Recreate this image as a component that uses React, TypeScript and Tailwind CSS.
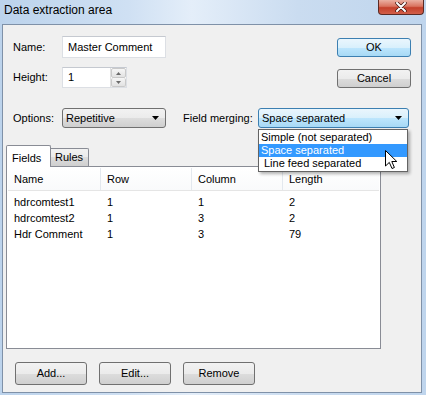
import React from 'react';

const rows = [
  { name: 'hdrcomtest1', row: '1', col: '1', len: '2' },
  { name: 'hdrcomtest2', row: '1', col: '3', len: '2' },
  { name: 'Hdr Comment', row: '1', col: '3', len: '79' },
];

function Caret() {
  return (
    <svg width="7" height="4" viewBox="0 0 7 4">
      <path d="M0 0 H7 L3.5 4 Z" fill="#000" />
    </svg>
  );
}

function Spinner() {
  return (
    <div className="flex flex-col w-[16px] h-full border-l border-[#e0e0e0]">
      <div className="flex-1 flex items-center justify-center bg-gradient-to-b from-[#f6f6f6] to-[#e2e2e2] border border-[#c9c9c9] rounded-[2px]">
        <svg width="5" height="3" viewBox="0 0 5 3">
          <path d="M0 3 H5 L2.5 0 Z" fill="#6b6b6b" />
        </svg>
      </div>
      <div className="flex-1 flex items-center justify-center bg-gradient-to-b from-[#f6f6f6] to-[#e2e2e2] border border-t-0 border-[#c9c9c9] rounded-[2px]">
        <svg width="5" height="3" viewBox="0 0 5 3">
          <path d="M0 0 H5 L2.5 3 Z" fill="#6b6b6b" />
        </svg>
      </div>
    </div>
  );
}

function Button({ label, primary }: { label: string; primary?: boolean }) {
  return (
    <div
      className={
        primary
          ? 'w-[74px] h-[21px] flex items-center justify-center rounded-[3px] border border-[#3c7fb1] bg-[linear-gradient(#eaf6fd,#d9f0fc_50%,#bee6fd_50%,#a7d9f5)]'
          : 'w-[74px] h-[21px] flex items-center justify-center rounded-[3px] border border-[#707070] bg-[linear-gradient(#f2f2f2,#ebebeb_50%,#dddddd_50%,#cfcfcf)]'
      }
    >
      {label}
    </div>
  );
}

function BottomButton({ label }: { label: string }) {
  return (
    <div className="w-[72px] h-[23px] flex items-center justify-center rounded-[3px] border border-[#707070] bg-[linear-gradient(#f2f2f2,#ebebeb_50%,#dddddd_50%,#cfcfcf)]">
      {label}
    </div>
  );
}

export default function App() {
  return (
    <div className="relative w-[426px] h-[395px] overflow-hidden flex flex-col font-['Liberation_Sans',Arial,sans-serif] text-[11px] text-black bg-[linear-gradient(90deg,#bcd3ec,#cfe0f3_30%,#e4eef9_45%,#cadcf0_70%,#bfd5ed)]">
      {/* Title bar */}
      <div className="h-[24px] flex items-start shrink-0">
        <span className="pl-[4px] pt-[3px] text-[12px] leading-[15px]">Data extraction area</span>
        <div className="ml-auto mr-[2px] w-[46px] h-[15px] flex items-center justify-center rounded-b-[4px] border border-t-0 border-[#5b2a24] bg-[linear-gradient(#eab0a2,#d9735f_45%,#c4402b_55%,#d2604a)]">
          <svg width="12" height="10" viewBox="0 0 12 10">
            <path d="M2 1 L10 9 M10 1 L2 9" stroke="#3b1410" strokeWidth="3.4" strokeLinecap="round" />
            <path d="M2 1 L10 9 M10 1 L2 9" stroke="#ffffff" strokeWidth="2" strokeLinecap="round" />
          </svg>
        </div>
      </div>

      {/* Client area */}
      <div className="ml-[2px] mr-[4px] mb-[2px] flex-1 border border-[#7f91a8] bg-[#f0f0f0] flex flex-col">
        <div className="pt-[11px] h-[63px] flex">
          <div className="pl-[10px] flex flex-col">
            <div className="flex items-center h-[22px]">
              <span className="w-[49px]">Name:</span>
              <div className="w-[104px] h-[22px] flex items-center pl-[5px] bg-white border border-[#dcdfe4] border-t-[#c5c9d0]">
                Master Comment
              </div>
            </div>
            <div className="flex items-center h-[21px] mt-[9px]">
              <span className="w-[49px]">Height:</span>
              <div className="w-[65px] h-[21px] flex items-stretch bg-white border border-[#dcdfe4] border-t-[#c5c9d0]">
                <span className="flex-1 flex items-center pl-[5px]">1</span>
                <Spinner />
              </div>
            </div>
          </div>
          <div className="ml-auto mr-[10px] pt-[2px] flex flex-col gap-[12px]">
            <Button label="OK" primary />
            <Button label="Cancel" />
          </div>
        </div>

        {/* Options row */}
        <div className="mt-[20px] h-[20px] pl-[10px] flex items-center">
          <span className="w-[49px]">Options:</span>
          <div className="w-[104px] h-[20px] flex items-center justify-between pl-[3px] pr-[6px] rounded-[3px] border border-[#707070] bg-[linear-gradient(#f2f2f2,#ebebeb_50%,#dddddd_50%,#cfcfcf)]">
            <span>Repetitive</span>
            <Caret />
          </div>
          <span className="ml-[17px] w-[75px]">Field merging:</span>
          <div className="relative w-[151px] h-[20px]">
            <div className="w-full h-full flex items-center justify-between pl-[3px] pr-[6px] rounded-[3px] border border-[#3c7fb1] bg-[linear-gradient(#eaf6fd,#d9f0fc_50%,#bee6fd_50%,#a7d9f5)]">
              <span>Space separated</span>
              <Caret />
            </div>
            <div className="absolute left-0 top-[21px] w-[150px] z-20 bg-white border border-[#646464] shadow-[2px_2px_3px_rgba(0,0,0,0.3)] py-[1px]">
              <div className="h-[13px] leading-[13px] pl-[2px]">Simple (not separated)</div>
              <div className="h-[13px] leading-[13px] pl-[2px] bg-[#3399ff] text-white">Space separated</div>
              <div className="h-[13px] leading-[13px] pl-[5px]">Line feed separated</div>
            </div>
          </div>
        </div>

        {/* Tabs */}
        <div className="mt-[17px] pl-[3px] h-[21px] flex items-end">
          <div className="relative z-10 -mb-px w-[45px] h-[22px] flex items-start pt-[4px] pl-[5px] bg-white border border-b-0 border-[#898c95] rounded-t-[2px]">
            Fields
          </div>
          <div className="w-[38px] h-[18px] flex items-center pl-[4px] border border-l-0 border-b-0 border-[#898c95] rounded-tr-[2px] bg-[linear-gradient(#f2f2f2,#ebebeb_50%,#dddddd_50%,#cfcfcf)]">
            Rules
          </div>
        </div>
        <div className="ml-[3px] w-[375px] h-[183px] bg-white border border-[#898c95] p-px">
          <div className="h-[23px] flex items-stretch border-b border-[#e5e5e5] bg-[linear-gradient(#ffffff,#f9fafb)]">
            <div className="w-[93px] flex items-center pl-[6px] border-r border-[#e3e8ee]">Name</div>
            <div className="w-[91px] flex items-center pl-[6px] border-r border-[#e3e8ee]">Row</div>
            <div className="w-[91px] flex items-center pl-[6px] border-r border-[#e3e8ee]">Column</div>
            <div className="flex-1 flex items-center pl-[6px]">Length</div>
          </div>
          <div className="pt-[3px]">
            {rows.map((r) => (
              <div key={r.name} className="h-[16px] flex items-center">
                <div className="w-[93px] pl-[6px]">{r.name}</div>
                <div className="w-[91px] pl-[6px]">{r.row}</div>
                <div className="w-[91px] pl-[6px]">{r.col}</div>
                <div className="flex-1 pl-[6px]">{r.len}</div>
              </div>
            ))}
          </div>
        </div>

        {/* Bottom buttons */}
        <div className="mt-[13px] pl-[12px] flex gap-[12px]">
          <BottomButton label="Add..." />
          <BottomButton label="Edit..." />
          <BottomButton label="Remove" />
        </div>
      </div>

      {/* Mouse pointer */}
      <svg className="absolute left-[385px] top-[150px] z-30" width="13" height="20" viewBox="0 0 13 20">
        <path d="M0.5 0.5 L0.5 16 L4.3 12.4 L7 18.5 L9.4 17.5 L6.8 11.5 L11.8 11.5 Z" fill="#ffffff" stroke="#000000" strokeWidth="1" strokeLinejoin="round" />
      </svg>
    </div>
  );
}
